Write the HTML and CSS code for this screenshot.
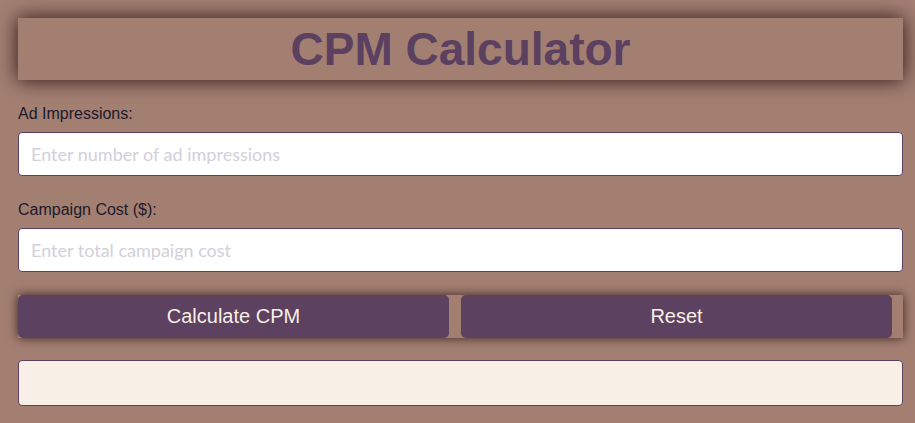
FILE: index.html
```html
<!DOCTYPE html>
<html lang="en">
<head>
<meta charset="utf-8">
<title>CPM Calculator</title>
<link rel="stylesheet" href="styles.css">
</head>
<body>
<div class="page">
  <header class="title-bar">
    <h1 class="title">CPM Calculator</h1>
  </header>
  <div class="field">
    <label class="field-label" for="impressions">Ad Impressions:</label>
    <input class="field-input" id="impressions" type="number" placeholder="Enter number of ad impressions">
  </div>
  <div class="field">
    <label class="field-label" for="cost">Campaign Cost ($):</label>
    <input class="field-input" id="cost" type="number" placeholder="Enter total campaign cost">
  </div>
  <div class="actions">
    <button class="btn" type="button">Calculate CPM</button>
    <button class="btn" type="button">Reset</button>
  </div>
  <div class="result"></div>
</div>
</body>
</html>
```

FILE: styles.css
```css
html, body {
  margin: 0;
  padding: 0;
}

body {
  background: #a37f72;
  font-family: "Liberation Sans", Arial, sans-serif;
  color: #1c1a2a;
}

.page {
  padding: 18px 12px 18px 18px;
}

.title-bar {
  background: #a37f72;
  height: 62px;
  display: flex;
  align-items: center;
  justify-content: center;
  box-shadow: 0 0 20px rgba(25, 8, 8, 0.9);
  margin-bottom: 25px;
}

.title {
  margin: 0;
  font-size: 46px;
  font-weight: 700;
  line-height: 1;
  color: #5c4060;
}

.field {
  margin-bottom: 25px;
}

.field-label {
  display: block;
  font-size: 16px;
  line-height: 18px;
  margin-bottom: 9px;
  color: #1c1a2a;
}

.field-input {
  display: block;
  box-sizing: border-box;
  width: 100%;
  height: 44px;
  margin: 0;
  padding: 0 12px;
  border: 1px solid #5c4060;
  border-radius: 4px;
  background: #ffffff;
  font-family: Lato, "Noto Sans", sans-serif;
  font-size: 18px;
  color: #333;
}

.field-input::placeholder {
  color: #d2d0da;
}

.field + .field {
  margin-bottom: 23px;
}

.actions {
  display: flex;
  gap: 12px;
  padding-right: 11px;
  height: 43px;
  box-shadow: 0 0 10px rgba(30, 10, 10, 0.8);
  margin-bottom: 22px;
}

.btn {
  flex: 1;
  margin: 0;
  border: none;
  border-radius: 5px;
  background: #5c4160;
  color: #f8efe6;
  font-family: "Liberation Sans", Arial, sans-serif;
  font-size: 20px;
  cursor: pointer;
}

.result {
  box-sizing: border-box;
  height: 46px;
  border: 1px solid #5c4060;
  border-radius: 4px;
  background: #f8f0e6;
}
```
